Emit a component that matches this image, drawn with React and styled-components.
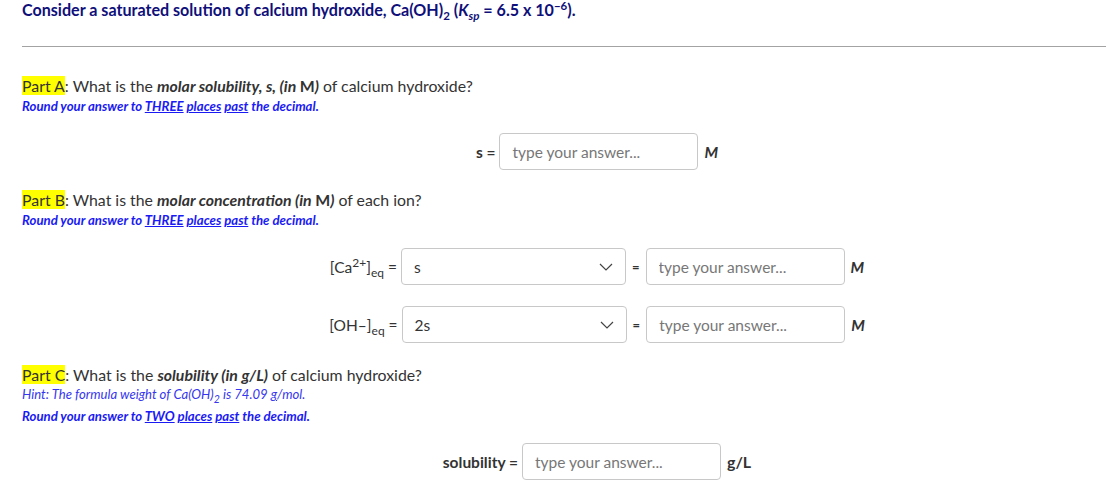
import React from 'react';
import styled, { createGlobalStyle } from 'styled-components';

const Global = createGlobalStyle`
  html, body {
    margin: 0;
    padding: 0;
    background: #fff;
    overflow: hidden;
  }
  body {
    font-family: Lato, "Open Sans", sans-serif;
    color: #333;
  }
`;

const Page = styled.div`
  padding-left: 22px;
`;

const Title = styled.h1`
  margin: 0;
  font-size: 16.1px;
  line-height: 20px;
  font-weight: 700;
  color: #10107a;
  sup, sub { font-size: 11.5px; line-height: 0; }
`;

const Rule = styled.hr`
  margin: 26px 0 0 0;
  border: none;
  border-top: 1px solid #a3a3a3;
  height: 0;
`;

const Question = styled.p`
  margin: ${p => p.$top}px 0 0 0;
  font-size: 15.85px;
  line-height: 20px;
  color: #333;
`;

const Tag = styled.span`
  background: #ffff00;
`;

const Note = styled.p`
  margin: ${p => p.$top}px 0 0 0;
  font-size: ${p => (p.$light ? 13.1 : 13.2)}px;
  line-height: 16px;
  font-style: italic;
  font-weight: ${p => (p.$light ? 400 : 700)};
  color: ${p => (p.$light ? '#3636f0' : '#1a1af5')};
  u { text-decoration-thickness: 1px; }
  sub { font-size: 10.5px; line-height: 0; }
`;

const Row = styled.div`
  display: flex;
  align-items: center;
  justify-content: center;
  gap: 4px;
  margin-top: ${p => p.$top}px;
  padding-left: 66px;
  height: 37px;
`;

const Label = styled.span`
  font-size: 15.5px;
  font-weight: ${p => (p.$bold ? 700 : 400)};
  color: #333;
  white-space: nowrap;
  sup, sub { font-size: 12px; line-height: 0; }
`;

const Input = styled.input`
  box-sizing: border-box;
  width: 199px;
  height: 37px;
  margin-right: 2px;
  border: 1px solid #c8c8c8;
  border-radius: 4px;
  padding: 0 12px;
  font-family: Lato, sans-serif;
  font-size: 15.5px;
  color: #333;
  background: #fff;
  &::placeholder { color: #777; }
`;

const Select = styled.div`
  box-sizing: border-box;
  width: 225px;
  height: 37px;
  border: 1px solid #c8c8c8;
  border-radius: 4px;
  padding: 0 12px 0 12px;
  display: flex;
  align-items: center;
  justify-content: space-between;
  font-size: 15.5px;
  color: #333;
`;

const Equals = styled.span`
  font-size: 13px;
  font-weight: 700;
  color: #333;
  margin: 0 2px;
`;

const Unit = styled.span`
  font-size: ${p => (p.$italic ? 15.5 : 16)}px;
  font-weight: 700;
  font-style: ${p => (p.$italic ? 'italic' : 'normal')};
  color: #333;
`;

const Chevron = () => (
  <svg width="14" height="8" viewBox="0 0 14 8" fill="none">
    <path d="M1 1l6 6 6-6" stroke="#444" strokeWidth="1.2" />
  </svg>
);

const RoundNote = ({ top, word }) => (
  <Note $top={top}>
    Round your answer to <u>{word}</u> <u>places</u> <u>past</u> the decimal.
  </Note>
);

export default function App() {
  return (
    <Page>
      <Global />
      <Title>
        Consider a saturated solution of calcium hydroxide, Ca(OH)<sub>2</sub> (<i>K<sub>sp</sub></i> = 6.5 x 10<sup>−6</sup>).
      </Title>
      <Rule />

      <Question $top={29}>
        <Tag>Part A</Tag>: What is the <b><i>molar solubility, s, (in </i>M<i>)</i></b> of calcium hydroxide?
      </Question>
      <RoundNote top={2} word="THREE" />
      <Row $top={19}>
        <Label $bold>s =</Label>
        <Input placeholder="type your answer..." />
        <Unit $italic>M</Unit>
      </Row>

      <Question $top={20}>
        <Tag>Part B</Tag>: What is the <b><i>molar concentration (in </i>M<i>)</i></b> of each ion?
      </Question>
      <RoundNote top={2} word="THREE" />
      <Row $top={20}>
        <Label>[Ca<sup>2+</sup>]<sub>eq</sub> =</Label>
        <Select>s<Chevron /></Select>
        <Equals>=</Equals>
        <Input placeholder="type your answer..." />
        <Unit $italic>M</Unit>
      </Row>
      <Row $top={21}>
        <Label>[OH–]<sub>eq</sub> =</Label>
        <Select>2s<Chevron /></Select>
        <Equals>=</Equals>
        <Input placeholder="type your answer..." />
        <Unit $italic>M</Unit>
      </Row>

      <Question $top={22}>
        <Tag>Part C</Tag>: What is the <b><i>solubility (in g/L)</i></b> of calcium hydroxide?
      </Question>
      <Note $top={1} $light>
        Hint: The formula weight of Ca(OH)<sub>2</sub> is 74.09 <u>g</u>/mol.
      </Note>
      <RoundNote top={6} word="TWO" />
      <Row $top={19}>
        <Label $bold>solubility =</Label>
        <Input placeholder="type your answer..." />
        <Unit>g/L</Unit>
      </Row>
    </Page>
  );
}
